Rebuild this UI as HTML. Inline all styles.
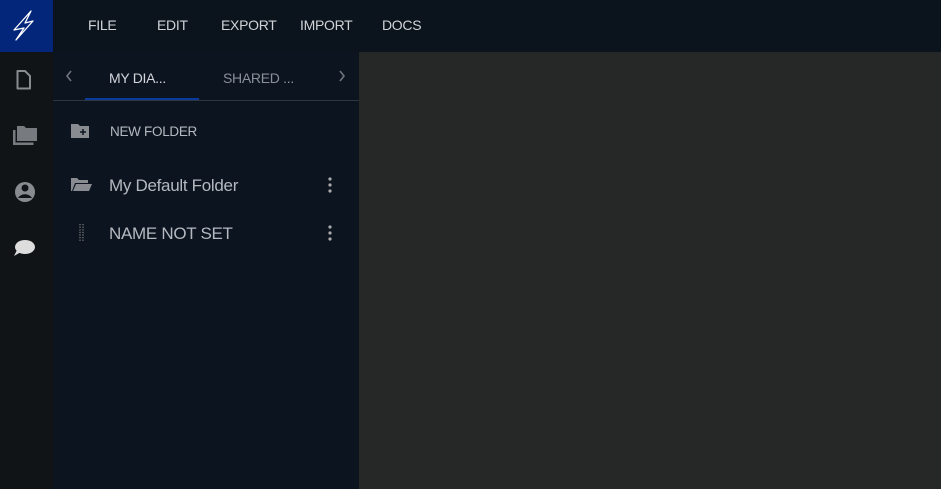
<!DOCTYPE html>
<html><head><style>
*{margin:0;padding:0;box-sizing:border-box}
body{width:941px;height:489px;background:#262727;font-family:"Liberation Sans",sans-serif;position:relative;overflow:hidden}
.top{position:absolute;left:0;top:0;width:941px;height:52px;background:#0b131c}
.logo{position:absolute;left:0;top:0;width:53px;height:52px;background:#03267a}
.menu{position:absolute;top:17px;color:#d0d3d8;font-size:14px;letter-spacing:-0.3px}
.rail{position:absolute;left:0;top:52px;width:53px;height:437px;background:#111417}
.panel{position:absolute;left:53px;top:52px;width:306px;height:437px;background:#0c1420}
.t{position:absolute;color:#bfc3c9;letter-spacing:-0.3px}
</style></head><body>
<div class="top"></div>
<div class="logo"><svg width="53" height="52"><path d="M31 11 L14 30 L24 28 L16 40 L33 21 L25 23 Z" stroke="#fff" stroke-width="1.3" fill="none" stroke-linejoin="round"/></svg></div>
<div class="menu" style="left:88px">FILE</div>
<div class="menu" style="left:157px">EDIT</div>
<div class="menu" style="left:221px">EXPORT</div>
<div class="menu" style="left:300px">IMPORT</div>
<div class="menu" style="left:382px">DOCS</div>
<div class="rail">
<svg width="53" height="230" style="position:absolute;top:0;left:0">
<path d="M17.5 19h7.5l5 5v12.5h-12.5z" fill="none" stroke="#888c91" stroke-width="2" stroke-linejoin="round"/>
<path d="M13 78h2.5v12.5h18v2.5h-20.5z" fill="#777b80"/><path d="M17 74h7l2 2h11v13h-20z" fill="#777b80"/>
<circle cx="25" cy="140" r="10" fill="#888c91"/><circle cx="25" cy="136" r="3.5" fill="#111417"/><path d="M18 146c3-5 11-5 14 0" fill="#111417"/>
<ellipse cx="25" cy="195" rx="10" ry="7" fill="#ddd"/><path d="M17 198l-3 6 7-4z" fill="#ddd"/>
</svg>
</div>
<div class="panel">
<div style="position:absolute;left:0;top:48px;width:306px;height:1px;background:#2c3540"></div>
<div style="position:absolute;left:32px;top:46px;width:114px;height:2px;background:#0a3a9a"></div>
<svg width="306" height="200" style="position:absolute;left:0;top:0">
<path d="M18 19l-4 5 4 5M287 19l4 5-4 5" stroke="#6f757c" stroke-width="1.6" fill="none"/>
<path d="M18 72h7l2 2h9v12h-18z" fill="#888c91"/><path d="M27 80h6M30 77v6" stroke="#0c1420" stroke-width="1.5"/>
<path d="M18 139v-13h6l2 2h9v3h-13l-3 8z" fill="#888c91"/><path d="M20 139l3-7h16l-3 7z" fill="#888c91"/>
<circle cx="277" cy="127" r="1.6" fill="#aaa"/><circle cx="277" cy="133" r="1.6" fill="#aaa"/><circle cx="277" cy="139" r="1.6" fill="#aaa"/>
<circle cx="277" cy="175" r="1.6" fill="#aaa"/><circle cx="277" cy="181" r="1.6" fill="#aaa"/><circle cx="277" cy="187" r="1.6" fill="#aaa"/>
<path d="M27 172v18M30 172v18" stroke="#777" stroke-width="1.3" stroke-dasharray="1.3 1.3"/>
</svg>
<div class="t" style="left:56px;top:18px;font-size:14px;color:#d2d5da">MY DIA...</div>
<div class="t" style="left:170px;top:18px;font-size:14px;color:#8a9097">SHARED ...</div>
<div class="t" style="left:57px;top:72px;font-size:13.5px;color:#b5b9bf">NEW FOLDER</div>
<div class="t" style="left:56px;top:124px;font-size:17px;color:#b5b9bf">My Default Folder</div>
<div class="t" style="left:56px;top:172px;font-size:17px;color:#b5b9bf">NAME NOT SET</div>
</div>
</body></html>
